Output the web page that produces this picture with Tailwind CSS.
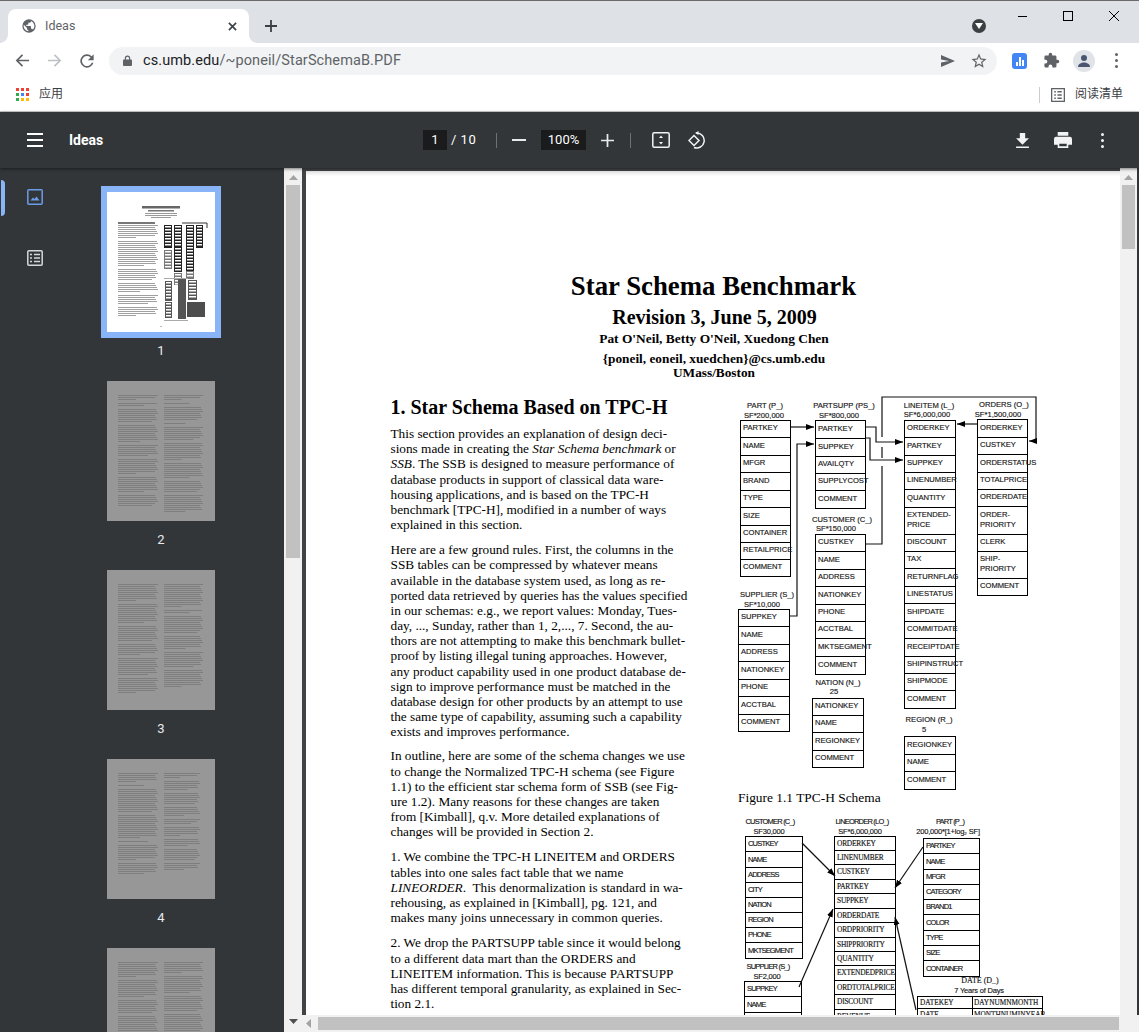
<!DOCTYPE html>
<html>
<head>
    <title>Ideas</title>
    <meta charset="utf-8">
    <script src="https://cdn.jsdelivr.net/npm/@tailwindcss/browser@4"></script>
</head>
<body class="h-[1032px] w-[1139px] overflow-hidden bg-white font-['Liberation_Sans','Noto_Sans_CJK_SC',sans-serif]">

    <!-- tab strip -->
    <div class="h-[43px] bg-[#dee1e6] border-t border-[#6b6b6b] flex items-end relative">
        <div class="ml-[8px] w-[241px] h-[34px] bg-white rounded-t-lg flex items-center pl-[13px] pr-[12px] relative">
            <div class="absolute left-[-8px] bottom-0 w-[8px] h-[8px] bg-[radial-gradient(circle_at_0_0,#dee1e6_7.500px,#fff_8px)]"></div>
            <div class="absolute right-[-8px] bottom-0 w-[8px] h-[8px] bg-[radial-gradient(circle_at_100%_0,#dee1e6_7.500px,#fff_8px)]"></div>
            <svg class="w-[16px] h-[16px] shrink-0 -mt-[1px]" viewBox="0 0 24 24" fill="#5f6368"><path d="M12 2a10 10 0 1 0 0 20 10 10 0 0 0 0-20zm-1 17.900A8 8 0 0 1 4.200 10.200L9 15v1c0 1.100.9 2 2 2v1.900zm6.900-2.500c-.3-.8-1-1.400-1.900-1.400h-1v-3c0-.6-.4-1-1-1H8v-2h2c.6 0 1-.4 1-1V7h2c1.100 0 2-.9 2-2v-.4a8 8 0 0 1 2.900 12.800z"/></svg>
            <span class="ml-[8px] mt-px text-[12.500px] text-[#5f6368] font-['Roboto']">Ideas</span>
            <svg class="ml-auto w-[9px] h-[9px]" viewBox="0 0 10 10" stroke="#3c4043" stroke-width="1.800"><path d="M1 1l8 8M9 1l-8 8"/></svg>
        </div>
        <svg class="ml-[16px] mb-[11px] w-[12px] h-[12px]" viewBox="0 0 12 12" stroke="#3c4043" stroke-width="1.800"><path d="M6 0v12M0 6h12"/></svg>
        <div class="ml-auto flex items-center h-full relative">
            <div class="w-[14px] h-[14px] rounded-full bg-[#3c4043] flex items-center justify-center mt-[7px] mr-[153px]">
                <svg class="w-[8px] h-[6px]" viewBox="0 0 8 6" fill="#fff"><path d="M0 0h8L4 6z"/></svg>
            </div>
            <div class="absolute right-[2px] top-0 h-[30px] flex">
                <div class="w-[46px] flex items-center justify-center"><div class="w-[9px] h-px bg-black"></div></div>
                <div class="w-[46px] flex items-center justify-center"><div class="w-[10px] h-[10px] border border-black"></div></div>
                <div class="w-[46px] flex items-center justify-center"><svg class="w-[10px] h-[10px]" viewBox="0 0 10 10" stroke="#000" stroke-width="1"><path d="M0 0l10 10M10 0L0 10"/></svg></div>
            </div>
        </div>
    </div>

    <!-- address bar -->
    <div class="h-[35px] flex items-center bg-white">
        <svg class="ml-[15px] w-[15px] h-[15px]" viewBox="0 0 16 16" fill="none" stroke="#5f6368" stroke-width="1.800"><path d="M15 8H2M8 2L2 8l6 6"/></svg>
        <svg class="ml-[17px] w-[15px] h-[15px]" viewBox="0 0 16 16" fill="none" stroke="#bdc1c6" stroke-width="1.800"><path d="M1 8h13M8 2l6 6-6 6"/></svg>
        <svg class="ml-[15px] w-[20px] h-[20px]" viewBox="0 0 24 24" fill="#5f6368"><path d="M17.650 6.350A8 8 0 1 0 19.730 14h-2.080a6 6 0 1 1-1.410-6.240L13 11h7V4z"/></svg>
        <div class="ml-[12px] w-[888px] h-[28px] rounded-full bg-[#f1f3f4] flex items-center pl-[14px] pr-[9px]">
            <svg class="w-[9px] h-[11px]" viewBox="0 0 10 12" fill="#5f6368"><path d="M2 5V3.500a3 3 0 0 1 6 0V5h1a1 1 0 0 1 1 1v5a1 1 0 0 1-1 1H1a1 1 0 0 1-1-1V6a1 1 0 0 1 1-1zm1.300 0h3.400V3.500a1.700 1.700 0 0 0-3.400 0z"/></svg>
            <span class="ml-[11px] mt-px text-[14.500px] text-[#202124] tracking-[0.1px] font-['Roboto']">cs.umb.edu<span class="text-[#5f6368]">/~poneil/StarSchemaB.PDF</span></span>
            <svg class="ml-auto w-[14px] h-[12px]" viewBox="0 0 14 12" fill="#5f6368"><path d="M0 0l14 6-14 6V7.500L8 6 0 4.500z"/></svg>
            <svg class="ml-[15px] w-[18px] h-[18px]" viewBox="0 0 24 24" fill="#5f6368"><path d="M22 9.240l-7.190-.620L12 2 9.190 8.630 2 9.240l5.460 4.730L5.820 21 12 17.270 18.180 21l-1.630-7.030zM12 15.400l-3.760 2.270 1-4.280-3.320-2.880 4.380-.380L12 6.100l1.710 4.040 4.380.380-3.320 2.880 1 4.280z"/></svg>
        </div>
        <div class="ml-[15px] w-[15px] h-[16px] rounded-[3px] bg-[#4285f4] flex items-end justify-center gap-[1px] pb-[3px]">
            <div class="w-[2px] h-[4px] bg-white"></div><div class="w-[2px] h-[9px] bg-white"></div><div class="w-[2px] h-[6px] bg-white"></div>
        </div>
        <svg class="ml-[16px] w-[17px] h-[17px]" viewBox="0 0 24 24" fill="#5f6368"><path d="M20.500 11H19V7a2 2 0 0 0-2-2h-4V3.500a2.500 2.500 0 0 0-5 0V5H4a2 2 0 0 0-2 2v3.800h1.500a2.700 2.700 0 0 1 0 5.400H2V20a2 2 0 0 0 2 2h3.800v-1.500a2.700 2.700 0 0 1 5.400 0V22H17a2 2 0 0 0 2-2v-4h1.500a2.500 2.500 0 0 0 0-5z"/></svg>
        <div class="ml-[13px] w-[22px] h-[22px] rounded-full bg-[#e0e3e8] flex items-center justify-center">
            <svg class="w-[14px] h-[14px]" viewBox="0 0 14 14" fill="#4a5570"><circle cx="7" cy="4" r="3"/><path d="M1 13c0-3 3-4.500 6-4.500s6 1.500 6 4.500z"/></svg>
        </div>
        <div class="ml-[20px] flex flex-col gap-[3px]">
            <div class="w-[3px] h-[3px] rounded-full bg-[#5f6368]"></div><div class="w-[3px] h-[3px] rounded-full bg-[#5f6368]"></div><div class="w-[3px] h-[3px] rounded-full bg-[#5f6368]"></div>
        </div>
    </div>

    <!-- bookmarks -->
    <div class="h-[33px] flex items-center bg-white border-b border-[#ccc] box-content">
        <div class="ml-[16px] grid grid-cols-3 gap-[2px] w-[13px]">
            <div class="h-[3px] bg-[#ea4335]"></div><div class="h-[3px] bg-[#ea4335]"></div><div class="h-[3px] bg-[#ea4335]"></div>
            <div class="h-[3px] bg-[#34a853]"></div><div class="h-[3px] bg-[#4285f4]"></div><div class="h-[3px] bg-[#ea4335]"></div>
            <div class="h-[3px] bg-[#34a853]"></div><div class="h-[3px] bg-[#fbbc05]"></div><div class="h-[3px] bg-[#fbbc05]"></div>
        </div>
        <span class="ml-[10px] -mt-[2px] text-[12px] text-[#3c4043]">应用</span>
        <div class="ml-auto w-px h-[16px] bg-[#ccc]"></div>
        <svg class="ml-[11px] w-[14px] h-[14px]" viewBox="0 0 13 13" fill="none" stroke="#5f6368" stroke-width="1.200"><rect x=".6" y=".6" width="11.800" height="11.800"/><path d="M3 3.500h1.500M6 3.500h4M3 6.500h1.500M6 6.500h4M3 9.500h1.500M6 9.500h4"/></svg>
        <span class="ml-[10px] mr-[16px] -mt-[2px] text-[12px] text-[#3c4043]">阅读清单</span>
    </div>

    <!-- pdf toolbar -->
    <div class="h-[56px] bg-[#323639] flex items-center text-white shadow-[0_1px_3px_rgba(0,0,0,0.5)] relative z-10">
        <div class="ml-[27px] w-[16px] flex flex-col gap-[4px]">
            <div class="h-[2px] bg-white"></div><div class="h-[2px] bg-white"></div><div class="h-[2px] bg-white"></div>
        </div>
        <span class="ml-[26px] w-[34px] text-[14px] font-bold font-['Roboto']">Ideas</span>
        <div class="ml-[320px] w-[24px] h-[20px] bg-[#191b1c] flex items-center justify-center text-[13px] font-['Roboto']">1</div>
        <span class="ml-[4px] w-[25px] text-[13px] font-['Roboto'] tracking-[0.5px] whitespace-nowrap">/ 10</span>
        <div class="ml-[20px] w-px h-[15px] bg-[#6e7275]"></div>
        <div class="ml-[15px] w-[14px] h-[2px] bg-[#e8eaed]"></div>
        <div class="ml-[15px] w-[45px] h-[20px] bg-[#191b1c] flex items-center justify-center text-[13px] font-['Roboto']">100%</div>
        <svg class="ml-[15px] w-[13px] h-[13px]" viewBox="0 0 12 12" stroke="#e8eaed" stroke-width="1.600"><path d="M6 0v12M0 6h12"/></svg>
        <div class="ml-[16px] w-px h-[15px] bg-[#6e7275]"></div>
        <svg class="ml-[21px] w-[18px] h-[16px]" viewBox="0 0 18 16" fill="none" stroke="#f1f3f4" stroke-width="1.500"><rect x=".8" y=".8" width="16.400" height="14.400" rx="1.500"/><path d="M9 3.500L7 6h4zM9 12.500L7 10h4z" fill="#f1f3f4" stroke="none"/></svg>
        <svg class="ml-[18px] w-[18px] h-[18px]" viewBox="0 0 18 18" fill="none" stroke="#f1f3f4" stroke-width="1.500"><path d="M6 4.500L1 9.500l5 5 5-5z"/><path d="M8.500 2a7.500 7.500 0 1 1-2.500 14.500"/><path d="M10.500 0L7 2l3.500 2z" fill="#f1f3f4" stroke="none"/></svg>
        <svg class="ml-[310px] w-[13px] h-[15px]" viewBox="0 0 12 14" fill="#f1f3f4"><path d="M3.500 0h5v5H12L6 11 0 5h3.500zM0 12.500h12V14H0z"/></svg>
        <svg class="ml-[25px] w-[18px] h-[16px]" viewBox="0 0 17 15" fill="#f1f3f4"><path d="M3.500 0h10v3.500h-10zM2 4.500h13a2 2 0 0 1 2 2V12h-3.500v3h-10v-3H0V6.500a2 2 0 0 1 2-2zm3 6.500v2.500h7V11z"/></svg>
        <div class="ml-[29px] flex flex-col gap-[3px]">
            <div class="w-[3px] h-[3px] rounded-full bg-[#f1f3f4]"></div><div class="w-[3px] h-[3px] rounded-full bg-[#f1f3f4]"></div><div class="w-[3px] h-[3px] rounded-full bg-[#f1f3f4]"></div>
        </div>
    </div>

    <!-- viewer -->
    <div class="h-[864px] flex bg-[#323639]">
        <!-- sidebar -->
        <aside class="w-[284px] shrink-0 flex overflow-hidden">
            <div class="w-[101px] shrink-0 relative">
                <div class="absolute left-[1px] top-[12px] w-[4px] h-[36px] bg-[#8ab4f8] rounded-r-sm"></div>
                <svg class="absolute left-[27px] top-[21px] w-[16px] h-[16px]" viewBox="0 0 16 16" fill="none" stroke="#6a9ce8" stroke-width="1.500"><rect x=".8" y=".8" width="14.400" height="14.400" rx="1"/><path d="M3.500 11.500l2.500-3 1.500 1.500 2-2.500 3 4z" fill="#6a9ce8" stroke="none"/></svg>
                <svg class="absolute left-[27px] top-[82px] w-[16px] h-[16px]" viewBox="0 0 16 16" fill="none" stroke="#d5d7d9" stroke-width="1.500"><rect x=".8" y=".8" width="14.400" height="14.400" rx="1"/><path d="M3 4.500h2M7 4.500h6M3 8h2M7 8h6M3 11.500h2M7 11.500h6"/></svg>
            </div>
            <div class="w-[120px] shrink-0 flex flex-col items-center pt-[18px]">
                <div class="shrink-0 border-[6px] border-[#8ab4f8]">
                    <div id="thumb-1" class="w-[108px] h-[140px] bg-white"></div>
                </div>
                <span class="shrink-0 mt-[4px] h-[18px] leading-[18px] text-[13px] text-[#e8eaed] font-['Roboto']">1</span>
                <div id="thumb-2" class="shrink-0 mt-[21px] w-[108px] h-[140px] bg-[#979797]"></div>
                <span class="shrink-0 mt-[10px] h-[18px] leading-[18px] text-[13px] text-[#e8eaed] font-['Roboto']">2</span>
                <div id="thumb-3" class="shrink-0 mt-[21px] w-[108px] h-[140px] bg-[#979797]"></div>
                <span class="shrink-0 mt-[10px] h-[18px] leading-[18px] text-[13px] text-[#e8eaed] font-['Roboto']">3</span>
                <div id="thumb-4" class="shrink-0 mt-[21px] w-[108px] h-[140px] bg-[#979797]"></div>
                <span class="shrink-0 mt-[10px] h-[18px] leading-[18px] text-[13px] text-[#e8eaed] font-['Roboto']">4</span>
                <div id="thumb-5" class="shrink-0 mt-[21px] w-[108px] h-[140px] bg-[#979797]"></div>
            </div>
        </aside>

        <!-- left scrollbar, runs the full height -->
        <div class="w-[18px] shrink-0 bg-[#f1f1f1] flex flex-col items-center">
            <svg class="mt-[7px] w-[9px] h-[5px]" viewBox="0 0 9 5" fill="#a3a3a3"><path d="M4.500 0L9 5H0z"/></svg>
            <div class="mt-[5px] w-[14px] h-[373px] bg-[#c1c1c1]"></div>
            <svg class="mt-auto mb-[8px] w-[9px] h-[5px]" viewBox="0 0 9 5" fill="#505050"><path d="M0 0h9L4.500 5z"/></svg>
        </div>

        <!-- document area -->
        <div class="flex-1 flex flex-col min-w-0">
            <div class="flex-1 flex min-h-0">
                <div class="w-[4px] shrink-0 bg-[#414447]"></div>
                <!-- pdf page -->
                <div class="flex-1 bg-white overflow-hidden relative">
                    <div class="absolute top-0 left-0 right-0 h-[3px] bg-[#414447]"></div>
                    <div class="absolute top-[3px] left-0 right-0 h-[5px] bg-gradient-to-b from-[#e2e2e2] to-white"></div>
                    <div class="w-[815px] pt-[103px] text-black font-['Liberation_Serif','Times_New_Roman',serif]">
                        <h1 class="text-center text-[26.800px] leading-[30px] font-bold">Star Schema Benchmark</h1>
                        <h2 class="text-center mt-[5px] text-[20px] leading-[22px] font-bold pl-[2px]">Revision 3, June 5, 2009</h2>
                        <p class="text-center mt-[3px] text-[13.400px] leading-[16px] font-bold pl-[1px]">Pat O'Neil, Betty O'Neil, Xuedong Chen</p>
                        <p class="text-center mt-[4px] text-[13.300px] leading-[15px] font-bold pl-[1px]">{poneil, eoneil, xuedchen}@cs.umb.edu</p>
                        <p class="text-center text-[13.300px] leading-[14px] font-bold pl-[1px]">UMass/Boston</p>
                        <div class="ml-[84.500px] mt-[16px] w-[310px] whitespace-nowrap text-[13.280px] leading-[15.170px]">
                            <h3 class="text-[20px] leading-[22px] font-bold">1. Star Schema Based on TPC-H</h3>
                            <p class="mt-[8px]">This section provides an explanation of design deci-<br>sions made in creating the <i>Star Schema benchmark</i> or<br><i>SSB</i>. The SSB is designed to measure performance of<br>database products in support of classical data ware-<br>housing applications, and is based on the TPC-H<br>benchmark [TPC-H], modified in a number of ways<br>explained in this section.</p>
                            <p class="mt-[10px]">Here are a few ground rules. First, the columns in the<br>SSB tables can be compressed by whatever means<br>available in the database system used, as long as re-<br>ported data retrieved by queries has the values specified<br>in our schemas: e.g., we report values: Monday, Tues-<br>day, ..., Sunday, rather than 1, 2,..., 7. Second, the au-<br>thors are not attempting to make this benchmark bullet-<br>proof by listing illegal tuning approaches. However,<br>any product capability used in one product database de-<br>sign to improve performance must be matched in the<br>database design for other products by an attempt to use<br>the same type of capability, assuming such a capability<br>exists and improves performance.</p>
                            <p class="mt-[9px]">In outline, here are some of the schema changes we use<br>to change the Normalized TPC-H schema (see Figure<br>1.1) to the efficient star schema form of SSB (see Fig-<br>ure 1.2). Many reasons for these changes are taken<br>from [Kimball], q.v. More detailed explanations of<br>changes will be provided in Section 2.</p>
                            <p class="mt-[10px]">1. We combine the TPC-H LINEITEM and ORDERS<br>tables into one sales fact table that we name<br><i>LINEORDER</i>.&nbsp; This denormalization is standard in wa-<br>rehousing, as explained in [Kimball], pg. 121, and<br>makes many joins unnecessary in common queries.</p>
                            <p class="mt-[10px]">2. We drop the PARTSUPP table since it would belong<br>to a different data mart than the ORDERS and<br>LINEITEM information. This is because PARTSUPP<br>has different temporal granularity, as explained in Sec-<br>tion 2.1.</p>
                        </div>
                    </div>
                    <!-- schema diagrams, coordinates are relative to the page -->
                    <div id="diagrams" class="absolute inset-0 font-['Liberation_Sans',sans-serif] text-[7.600px] text-[#111] [-webkit-text-stroke:0.15px_#222]"></div>
                </div>
                <div class="w-[17px] shrink-0 bg-[#f1f1f1] flex flex-col items-center">
                    <svg class="mt-[7px] w-[9px] h-[5px]" viewBox="0 0 9 5" fill="#a3a3a3"><path d="M4.500 0L9 5H0z"/></svg>
                    <div class="mt-[5px] w-[13px] h-[64px] bg-[#c1c1c1]"></div>
                </div>
                <div class="w-[2px] shrink-0 bg-[#323639]"></div>
            </div>
            <div class="h-[17px] shrink-0 bg-[#f1f1f1] flex items-center">
                <svg class="ml-[4px] w-[5px] h-[9px]" viewBox="0 0 5 9" fill="#a3a3a3"><path d="M5 0v9L0 4.500z"/></svg>
                <div class="ml-[7px] w-[801px] h-[13px] bg-[#c1c1c1]"></div>
            </div>
        </div>
    </div>

    <script>
        // thumbnails: rows of thin bars standing in for the shrunken text
        const lineRows = (x, y, w, paras, color) => {
            let out = '';
            paras.forEach((count, p) => {
                for (let i = 0; i < count; i++) {
                    const lw = i === count - 1 ? w * (0.45 + (p * 7 % 5) / 10) : w - ((i * 3 + p) % 4);
                    out += `<rect x="${x}" y="${y}" width="${lw}" height="1" fill="${color}"/>`;
                    y += 2;
                }
                y += 2;
            });
            return out;
        };
        const thumb = (id, body) => {
            document.getElementById(id).innerHTML = `<svg class="w-full h-full blur-[0.4px]" viewBox="0 0 108 140">${body}</svg>`;
        };
        const dark = '#7e7e7e';
        thumb('thumb-2', lineRows(11, 14, 40, [3, 2, 7, 9, 6, 8, 8, 6], dark) + lineRows(57, 14, 39, [3, 1, 7, 1, 7, 9, 8, 6, 9], dark));
        thumb('thumb-3', lineRows(11, 14, 40, [9, 10, 8, 6, 9, 8], dark) + lineRows(57, 14, 39, [12, 2, 9, 7, 8, 9], dark));
        thumb('thumb-4', lineRows(11, 14, 40, [5, 1, 12, 12, 1, 8, 6], dark) + lineRows(57, 14, 36, [3, 5, 6, 5, 3, 5, 4, 6, 4], dark));
        thumb('thumb-5', lineRows(11, 14, 40, [8, 9, 7, 10, 8, 9], dark) + lineRows(57, 14, 39, [6, 9, 8, 10, 8, 9], dark));
        const stack = (x, y, w, h, fill) => `<rect x="${x}" y="${y}" width="${w}" height="${h}" fill="${fill}"/>` +
            Array.from({ length: Math.floor(h / 3) }, (_, i) => `<rect x="${x + 1}" y="${y + 1 + i * 3}" width="${w - 2}" height="1.500" fill="#fff"/>`).join('');
        thumb('thumb-1',
            '<rect x="35" y="14" width="38" height="2.500" fill="#666"/><rect x="41" y="18" width="26" height="1.500" fill="#777"/><rect x="38" y="21" width="32" height="1" fill="#999"/><rect x="38" y="23" width="32" height="1" fill="#999"/><rect x="44" y="25" width="20" height="1" fill="#999"/><rect x="11" y="30" width="37" height="2" fill="#777"/>' +
            lineRows(11, 33, 40, [7, 13, 6, 5, 5, 5], '#a0a0a0') +
            stack(57, 33, 8, 23, '#222') + stack(57, 58, 8, 19, '#777') + stack(67, 33, 8, 22, '#222') + stack(67, 55, 8, 25, '#222') + stack(67, 81, 8, 12, '#777') +
            stack(79, 33, 8, 46, '#222') + stack(79, 79, 8, 8, '#777') + stack(89, 33, 7, 23, '#222') + '<path d="M75 31h25v5" fill="none" stroke="#333"/>' +
            '<rect x="57" y="86" width="24" height="1" fill="#aaa"/>' +
            stack(58, 89, 7, 20, '#555') + stack(58, 110, 7, 16, '#555') + '<rect x="71" y="87" width="8" height="40" fill="#555"/>' + stack(81, 88, 9, 20, '#555') + '<rect x="80" y="110" width="18" height="15" fill="#4d4d4d"/>' +
            '<rect x="57" y="128" width="24" height="1" fill="#aaa"/><rect x="53" y="134" width="2" height="1" fill="#bbb"/>'
        );

        // x,y are screenshot coords, the page starts at 306,168
        const pageX = 306, pageY = 168;
        const S = 'tracking-[-0.8px] text-[7.500px]';
        const U = 'tracking-[-0.2px] text-[7.500px]';
        const T = "font-['Liberation_Serif'] tracking-[-0.2px] text-[7.400px]";
        // name, name center x, name y, sub, sub center x, sub y, x, y, width, rows, row style, title style, sub style
        const tables = [
            ['PART (P_)', 765, 406, 'SF*200,000', 764, 416, 740, 420, 50, [['PARTKEY',17],['NAME',18],['MFGR',17],['BRAND',18],['TYPE',17],['SIZE',18],['CONTAINER',17],['RETAILPRICE',17],['COMMENT',17]], 'pb-[2px]', '', ''],
            ['PARTSUPP (PS_)', 844, 406, 'SF*800,000', 839, 416, 815, 420, 50, [['PARTKEY',18],['SUPPKEY',18],['AVAILQTY',17],['SUPPLYCOST',17],['COMMENT',18]], 'pb-[2px]', '', ''],
            ['CUSTOMER (C_)', 842, 520, 'SF*150,000', 836, 529, 815, 534, 50, [['CUSTKEY',17],['NAME',18],['ADDRESS',17],['NATIONKEY',18],['PHONE',17],['ACCTBAL',17],['MKTSEGMENT',18],['COMMENT',18]], 'pb-[2px]', '', ''],
            ['LINEITEM (L_)', 929, 406, 'SF*6,000,000', 927, 415, 904, 420, 51, [['ORDERKEY',17],['PARTKEY',18],['SUPPKEY',17],['LINENUMBER',17],['QUANTITY',18],['EXTENDED-<br>PRICE',27],['DISCOUNT',17],['TAX',17],['RETURNFLAG',18],['LINESTATUS',17],['SHIPDATE',18],['COMMITDATE',17],['RECEIPTDATE',18],['SHIPINSTRUCT',17],['SHIPMODE',17],['COMMENT',18]], 'pb-[2px]', '', ''],
            ['ORDERS (O_)', 1004, 405, 'SF*1,500,000', 998, 415, 977, 419, 50, [['ORDERKEY',18],['CUSTKEY',17],['ORDERSTATUS',18],['TOTALPRICE',17],['ORDERDATE',17],['ORDER-<br>PRIORITY',28],['CLERK',17],['SHIP-<br>PRIORITY',27],['COMMENT',17]], 'pb-[2px]', '', ''],
            ['SUPPLIER (S_)', 767, 595, 'SF*10,000', 762, 605, 738, 609, 51, [['SUPPKEY',17],['NAME',18],['ADDRESS',17],['NATIONKEY',18],['PHONE',17],['ACCTBAL',18],['COMMENT',17]], 'pb-[2px]', '', ''],
            ['NATION (N_)', 838, 683, '25', 834, 692, 812, 698, 51, [['NATIONKEY',17],['NAME',17],['REGIONKEY',18],['COMMENT',17]], 'pb-[2px]', '', ''],
            ['REGION (R_)', 929, 720, '5', 924, 730, 904, 736, 51, [['REGIONKEY',18],['NAME',17],['COMMENT',18]], 'pb-[2px]', '', ''],
            ['CUSTOMER (C_)', 770, 822, 'SF30,000', 769, 832, 745, 836, 57, [['CUSTKEY',15],['NAME',16],['ADDRESS',15],['CITY',15],['NATION',15],['REGION',15],['PHONE',15],['MKTSEGMENT',16]], S, S, U],
            ['SUPPLIER (S_)', 768, 967, 'SF2,000', 767, 977, 744, 981, 57, [['SUPPKEY',15],['NAME',16],['',15]], S, S, U],
            ['LINEORDER (LO_)', 862, 822, 'SF*6,000,000', 860, 832, 834, 836, 61, [['ORDERKEY',14],['LINENUMBER',14],['CUSTKEY',15],['PARTKEY',14],['SUPPKEY',15],['ORDERDATE',14],['ORDPRIORITY',15],['SHIPPRIORITY',14],['QUANTITY',14],['EXTENDEDPRICE',15],['ORDTOTALPRICE',14],['DISCOUNT',15],['REVENUE',15]], T, S, U],
            ['PART (P_)', 950, 822, '200,000*[1+log₂ SF]', 948, 832, 923, 838, 56, [['PARTKEY',15],['NAME',16],['MFGR',15],['CATEGORY',15],['BRAND1',15],['COLOR',16],['TYPE',15],['SIZE',15],['CONTAINER',16]], S, S, U],
        ];
        const box = document.getElementById('diagrams');
        const label = (text, cx, cy, style) =>
            `<div class="absolute leading-[10px] whitespace-nowrap -translate-x-1/2 ${style}" style="left:${cx - pageX}px;top:${cy - pageY - 5}px">${text}</div>`;
        let html = '';
        for (const [name, nx, ny, sub, sx, sy, x, y, w, rows, style, titleStyle, subStyle] of tables) {
            html += label(name, nx, ny, titleStyle) + label(sub, sx, sy, subStyle);
            html += `<div class="absolute border-x border-black bg-white ${style.startsWith('pb') ? '' : style}" style="left:${x - pageX}px;top:${y - pageY}px;width:${w + 1}px">`;
            const rowPad = style.startsWith('pb') ? style : '';
            for (const [text, h] of rows) {
                html += `<div class="border-t border-black px-[2px] leading-[10px] flex items-center whitespace-nowrap ${rowPad}" style="height:${h}px"><span>${text}</span></div>`;
            }
            html += `<div class="border-t border-black"></div></div>`;
        }
        // date table has two columns
        html += label('DATE (D_)', 980, 981, "font-['Liberation_Serif'] text-[8px]") + label('7 Years of Days', 979, 991, U);
        html += `<div class="absolute grid grid-cols-[55px_69px] border border-black font-['Liberation_Serif'] text-[7.300px] leading-[12px] bg-white" style="left:${917 - pageX}px;top:${996 - pageY}px"><div class="h-[12px] px-[2px] border-r border-b border-black">DATEKEY</div><div class="h-[12px] px-[1px] border-b border-black">DAYNUMNMONTH</div><div class="h-[15px] px-[2px] border-r border-black">DATE</div><div class="h-[15px] px-[1px]">MONTHNUMINYEAR</div></div>`;
        html += `<div class="absolute text-[13.400px] leading-[16px] font-['Liberation_Serif'] text-black whitespace-nowrap [-webkit-text-stroke:0]" style="left:${738 - pageX}px;top:${790 - pageY}px">Figure 1.1 TPC-H Schema</div>`;
        // connector lines with arrow heads
        const arrows = [
            'M791 427H814',
            'M789 616H797V444H814',
            'M866 427H876V442H903',
            'M866 438H870V460H903',
            'M977 424H957',
            'M882 437V397H1036V441H1029',
            'M802 843L835 876',
            'M923 847L895 888',
            'M799 987L833 909',
            'M916 1010L895 917',
        ];
        html += `<svg class="absolute pointer-events-none" style="left:${-pageX}px;top:${-pageY}px" width="1139" height="1032" fill="none" stroke="#111" stroke-width="1.200">
            <defs><marker id="head" viewBox="0 0 8 6" refX="8" refY="3" markerUnits="userSpaceOnUse" markerWidth="8" markerHeight="6" orient="auto"><path d="M0 0L8 3L0 6z" fill="#000" stroke="none"/></marker></defs>
            <path d="M866 544H882V466M882 458V447"/>
            ${arrows.map(d => `<path d="${d}" marker-end="url(#head)"/>`).join('')}
        </svg>`;
        box.innerHTML = html;
    </script>
</body>
</html>
